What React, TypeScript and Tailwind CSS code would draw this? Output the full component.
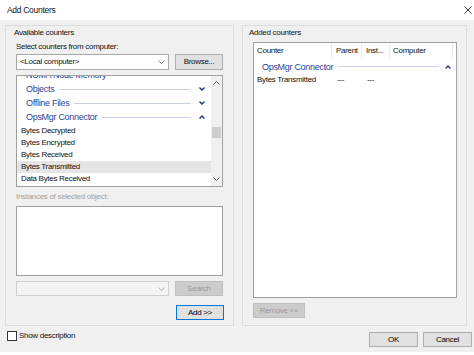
import React from "react";

const Chevron = ({ up, color = "#1e3287", className = "" }: { up?: boolean; color?: string; className?: string }) => (
    <svg width="6" height="4" viewBox="0 0 6 4" className={className}>
        <polyline
            points={up ? "0.5,3.5 3,1 5.5,3.5" : "0.5,0.5 3,3 5.5,0.5"}
            fill="none"
            stroke={color}
            strokeWidth="1.4"
        />
    </svg>
);

const ThinChevron = ({ up, color = "#7a7a7a" }: { up?: boolean; color?: string }) => (
    <svg width="7" height="4" viewBox="0 0 7 4">
        <polyline points={up ? "0.5,3.5 3.5,0.5 6.5,3.5" : "0.5,0.5 3.5,3.5 6.5,0.5"} fill="none" stroke={color} strokeWidth="1" />
    </svg>
);

const GroupRow = ({ label, up }: { label: string; up?: boolean }) => (
    <div className="flex h-[14px] items-center pl-[9px] pr-[6px]">
        <span className="text-[9px] tracking-[-0.3px] text-[#2d3f9c]">{label}</span>
        <div className="ml-[5px] mr-[8px] h-px flex-1 bg-[#c9d0e6]" />
        <Chevron up={up} />
    </div>
);

const Button = ({ label, kind = "normal", w }: { label: string; kind?: "normal" | "default" | "disabled"; w: string }) => {
    const styles = {
        normal: "bg-[#e1e1e1] border-[#adadad] text-black",
        default: "bg-[#e1e1e1] border-[#0078d7] text-black",
        disabled: "bg-[#cccccc] border-[#bfbfbf] text-[#9b9b9b]",
    };
    return (
        <div className={`flex h-[15px] items-center justify-center border ${w} ${styles[kind]}`}>
            {label}
        </div>
    );
};

export default function App() {
    const items = ["Bytes Decrypted", "Bytes Encrypted", "Bytes Received", "Bytes Transmitted", "Data Bytes Received"];

    return (
        <div className="flex h-[355px] w-[474px] flex-col overflow-hidden bg-white font-['Liberation_Sans',Arial,sans-serif] text-[8px] leading-[12px] tracking-[-0.3px] text-[#111]">
            {/* Title bar */}
            <div className="flex h-[20px] shrink-0 items-center justify-between pl-[7px] pr-[2px]">
                <span className="text-[8.5px]">Add Counters</span>
                <svg width="8" height="8" viewBox="0 0 8 8">
                    <path d="M0.5 0.5 L7.5 7.5 M7.5 0.5 L0.5 7.5" stroke="#222" strokeWidth="0.9" />
                </svg>
            </div>

            {/* Body */}
            <div className="flex h-[332px] flex-col bg-[#f0f0f0] pl-[5px] pt-[5px]">
                <div className="flex h-[301px] gap-[8px]">
                    {/* Available counters */}
                    <div className="flex w-[229px] flex-col border border-[#dcdcdc] pl-[10px]">
                        <div className="-ml-[2px] mt-[1px] h-[12px]">Available counters</div>
                        <div className="mt-[2px] h-[12px]">Select counters from computer:</div>
                        <div className="mt-[1px] flex gap-[6px]">
                            <div className="flex h-[16px] w-[153px] items-center justify-between border border-[#a8a8a8] bg-white pl-[3px] pr-[3px]">
                                <span>&lt;Local computer&gt;</span>
                                <ThinChevron color="#8a8a8a" />
                            </div>
                            <div className="flex h-[16px] w-[48px] items-center justify-center border border-[#adadad] bg-[#e1e1e1]">
                                Browse...
                            </div>
                        </div>

                        {/* Object list */}
                        <div className="mt-[5px] flex h-[112px] w-[207px] overflow-hidden border border-[#a0a0a0] bg-white">
                            <div className="flex-1 overflow-hidden">
                                <div className="-mt-[8px]">
                                    <div className="flex h-[14px] items-center pl-[9px] text-[9px] text-[#2d3f9c]">NUMA Node Memory</div>
                                    <GroupRow label="Objects" />
                                    <GroupRow label="Offline Files" />
                                    <div className="pb-[1px]">
                                        <GroupRow label="OpsMgr Connector" up />
                                    </div>
                                    {items.map((item) => (
                                        <div
                                            key={item}
                                            className={`flex h-[12px] items-center pl-[4px] ${item === "Bytes Transmitted" ? "bg-[#e5e5e5]" : ""}`}
                                        >
                                            {item}
                                        </div>
                                    ))}
                                </div>
                            </div>
                            {/* Scrollbar */}
                            <div className="flex w-[11px] flex-col items-center bg-[#f0f0f0] pt-[5px]">
                                <ThinChevron up color="#606060" />
                                <div className="mt-[42px] h-[11px] w-[9px] bg-[#cdcdcd]" />
                                <div className="flex-1" />
                                <div className="mb-[5px]">
                                    <ThinChevron color="#606060" />
                                </div>
                            </div>
                        </div>

                        <div className="mt-[4px] h-[12px] text-[#a3a3a3]">Instances of selected object:</div>
                        <div className="mt-[3px] h-[70px] w-[207px] border border-[#a0a0a0] bg-white" />

                        <div className="mt-[5px] flex gap-[6px]">
                            <div className="flex h-[15px] w-[153px] items-center justify-end border border-[#d0d0d0] bg-[#f3f3f3] pr-[3px]">
                                <ThinChevron color="#b5b5b5" />
                            </div>
                            <Button label="Search" kind="disabled" w="w-[48px]" />
                        </div>
                        <div className="mt-[9px] flex justify-end pr-[9px]">
                            <Button label="Add >>" kind="default" w="w-[48px]" />
                        </div>
                    </div>

                    {/* Added counters */}
                    <div className="flex w-[225px] flex-col border border-[#dcdcdc] pl-[10px]">
                        <div className="-ml-[4px] mt-[1px] h-[12px]">Added counters</div>
                        <div className="mt-[3px] flex h-[256px] w-[204px] flex-col border border-[#a0a0a0] bg-white">
                            <div className="flex h-[16px] items-center">
                                <div className="flex h-full w-[78px] items-center border-r border-[#ebebeb] pl-[3px]">Counter</div>
                                <div className="flex h-full w-[30px] items-center border-r border-[#ebebeb] pl-[4px]">Parent</div>
                                <div className="flex h-full w-[28px] items-center border-r border-[#ebebeb] pl-[4px]">Inst...</div>
                                <div className="flex h-full w-[63px] items-center border-r border-[#ebebeb] pl-[3px]">Computer</div>
                            </div>
                            <div className="flex h-[15px] items-center pl-[8px] pr-[5px]">
                                <span className="text-[9px] tracking-[-0.3px] text-[#2d3f9c]">OpsMgr Connector</span>
                                <div className="ml-[5px] mr-[6px] h-px flex-1 bg-[#c9d0e6]" />
                                <Chevron up />
                            </div>
                            <div className="flex h-[12px] items-center">
                                <div className="w-[78px] pl-[3px]">Bytes Transmitted</div>
                                <div className="w-[30px] pl-[5px]">---</div>
                                <div className="w-[28px] pl-[5px]">---</div>
                            </div>
                        </div>
                        <div className="mt-[5px]">
                            <Button label="Remove <<" kind="disabled" w="w-[52px]" />
                        </div>
                    </div>
                </div>

                {/* Bottom row */}
                <div className="flex items-start">
                    <div className="mt-[4px] flex items-center gap-[2px] pl-[2px]">
                        <div className="h-[10px] w-[10px] border border-[#333] bg-white" />
                        <span>Show description</span>
                    </div>
                    <div className="ml-auto mr-[2px] mt-[6px] flex gap-[5px]">
                        <Button label="OK" w="w-[49px]" />
                        <Button label="Cancel" w="w-[49px]" />
                    </div>
                </div>
            </div>
        </div>
    );
}
